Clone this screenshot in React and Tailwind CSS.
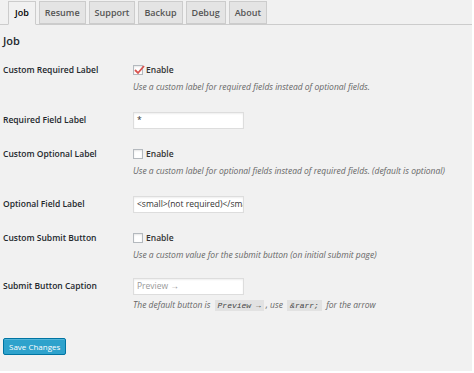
import React from 'react'

const TABS = ['Job', 'Resume', 'Support', 'Backup', 'Debug', 'About']

function Check({ checked }) {
  return (
    <span className="relative inline-block w-[10px] h-[10px] bg-white border border-[#b4b9be] shadow-[inset_0_1px_2px_rgba(0,0,0,0.1)]">
      {checked && (
        <svg className="absolute left-[-1px] top-[-3px]" width="13" height="13" viewBox="0 0 13 13">
          <path d="M2 7 L5 10 L11 3" fill="none" stroke="#d9534f" strokeWidth="1.8" />
        </svg>
      )}
    </span>
  )
}

function Label({ children }) {
  return <div className="w-[130px] shrink-0 font-semibold text-[8.5px] text-[#23282d]">{children}</div>
}

function Desc({ children }) {
  return <div className="h-[14px] leading-[14px] mt-[3px] italic text-[8.5px] text-[#666]">{children}</div>
}

function CheckRow({ label, checked, desc }) {
  return (
    <div className="flex items-start">
      <div className="h-[14px] leading-[14px] flex items-center"><Label>{label}</Label></div>
      <div>
        <div className="h-[14px] flex items-center gap-[3px]">
          <Check checked={checked} />
          <span className="font-semibold text-[8.5px] text-[#333]">Enable</span>
        </div>
        <Desc>{desc}</Desc>
      </div>
    </div>
  )
}

function InputRow({ label, value, placeholder, desc, className = '' }) {
  return (
    <div className={`flex items-start ${className}`}>
      <div className="h-[17px] flex items-center"><Label>{label}</Label></div>
      <div>
        <div className="w-[111px] h-[17px] bg-white border border-[#ddd] shadow-[inset_0_1px_2px_rgba(0,0,0,0.07)] px-[3px] flex items-center overflow-hidden whitespace-nowrap text-[8.5px] text-[#333]">
          {value ? value : <span className="text-[#999]">{placeholder}</span>}
        </div>
        {desc && <Desc>{desc}</Desc>}
      </div>
    </div>
  )
}

function Code({ children }) {
  return <code className="mx-[2px] px-[3px] py-[1px] bg-[#e2e2e2] text-[8px] text-[#444] font-['Liberation_Mono',monospace] italic">{children}</code>
}

export default function App() {
  return (
    <div className="w-[474px] h-[373px] bg-[#f1f1f1] font-['Open_Sans',sans-serif] relative overflow-hidden">
      {/* Tabs */}
      <div className="flex items-end gap-[3px] pl-[8px] pt-[2px] border-b border-[#ccc] h-[25px]">
        {TABS.map((t, i) => (
          <div
            key={t}
            className={`px-[5px] flex items-center border border-[#ccc] text-[9px] font-semibold ${
              i === 0 ? 'bg-[#f1f1f1] border-b-[#f1f1f1] mb-[-1px] h-[24px] px-[6px] text-[#000]' : 'h-[23px] bg-[#e4e4e4] text-[#555]'
            }`}
          >
            {t}
          </div>
        ))}
      </div>

      <div className="px-[3px]">
        <h2 className="mt-[9px] font-semibold text-[11px] text-[#23282d] leading-[14px]">Job</h2>

        <div className="mt-[15px] flex flex-col gap-[18px]">
          <CheckRow label="Custom Required Label" checked desc="Use a custom label for required fields instead of optional fields." />
          <InputRow label="Required Field Label" value="*" />
          <CheckRow label="Custom Optional Label" desc="Use a custom label for optional fields instead of required fields. (default is optional)" />
          <InputRow label="Optional Field Label" value="<small>(not required)</small>" />
          <CheckRow label="Custom Submit Button" desc="Use a custom value for the submit button (on initial submit page)" />
          <InputRow
            className="-mt-[2px]"
            label="Submit Button Caption"
            placeholder="Preview →"
            desc={<>The default button is <Code>Preview →</Code>, use <Code>&amp;rarr;</Code> for the arrow</>}
          />
        </div>

        <button className="mt-[26px] h-[17px] px-[5px] bg-[#2ea2cc] border border-[#0074a2] rounded-[2px] text-white text-[8px] leading-none shadow-[inset_0_1px_0_rgba(120,200,230,0.5)]">
          Save Changes
        </button>
      </div>
      <div className="absolute right-0 top-0 w-[2px] h-full bg-white" />
      <div className="absolute left-0 bottom-0 w-full h-[2px] bg-white" />
    </div>
  )
}
